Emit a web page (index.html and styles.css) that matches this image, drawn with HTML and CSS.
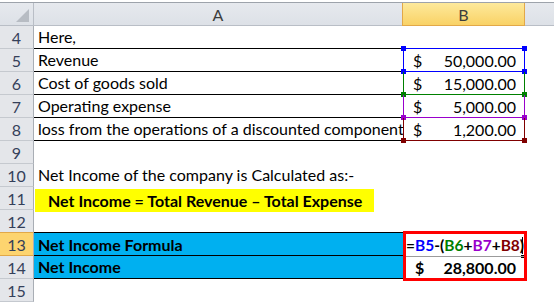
FILE: index.html
```html
<!DOCTYPE html>
<html>
<head>
<meta charset="utf-8">
<link rel="stylesheet" href="styles.css">
</head>
<body>
<div class="sheet">
  <div class="row colhead">
    <div class="corner"><span class="tri"></span></div>
    <div class="ch">A</div>
    <div class="ch ch-sel">B</div>
    <div class="ch ch-rest"></div>
  </div>

  <div class="row">
    <div class="rh">4</div>
    <div class="a bb">Here,</div>
    <div class="b"></div>
    <div></div>
  </div>
  <div class="row">
    <div class="rh">5</div>
    <div class="a bb">Revenue</div>
    <div class="b ref ref-blue"><span class="cur">$</span><span>50,000.00</span>
      <i class="h tl"></i><i class="h tr"></i><i class="h bl"></i><i class="h br"></i></div>
    <div></div>
  </div>
  <div class="row">
    <div class="rh">6</div>
    <div class="a bb">Cost of goods sold</div>
    <div class="b ref ref-green"><span class="cur">$</span><span>15,000.00</span>
      <i class="h bl"></i><i class="h br"></i></div>
    <div></div>
  </div>
  <div class="row">
    <div class="rh">7</div>
    <div class="a bb">Operating expense</div>
    <div class="b ref ref-purple"><span class="cur">$</span><span>5,000.00</span>
      <i class="h bl"></i><i class="h br"></i></div>
    <div></div>
  </div>
  <div class="row">
    <div class="rh">8</div>
    <div class="a bb">loss from the operations of a discounted component</div>
    <div class="b ref ref-red"><span class="cur">$</span><span>1,200.00</span>
      <i class="h bl"></i><i class="h br"></i></div>
    <div></div>
  </div>
  <div class="row">
    <div class="rh">9</div>
    <div class="a"></div>
    <div class="b"></div>
    <div></div>
  </div>
  <div class="row">
    <div class="rh">10</div>
    <div class="a">Net Income of the company is Calculated as:-</div>
    <div class="b"></div>
    <div></div>
  </div>
  <div class="row">
    <div class="rh">11</div>
    <div class="a"><div class="callout">Net Income = Total Revenue – Total Expense</div></div>
    <div class="b"></div>
    <div></div>
  </div>
  <div class="row">
    <div class="rh">12</div>
    <div class="a"></div>
    <div class="b"></div>
    <div></div>
  </div>
  <div class="result">
    <div class="row">
      <div class="rh rh-sel">13</div>
      <div class="a cyan bt bb bold">Net Income Formula</div>
      <div class="b formula bold"><span>=</span><span class="c-blue">B5</span><span>-(</span><span class="c-green">B6</span><span>+</span><span class="c-purple">B7</span><span>+</span><span class="c-red">B8</span><span>)</span><i class="caret"></i><i class="fill"></i></div>
      <div></div>
    </div>
    <div class="row">
      <div class="rh">14</div>
      <div class="a cyan bb bold">Net Income</div>
      <div class="b bold total"><span class="cur">$</span><span>28,800.00</span></div>
      <div></div>
    </div>
    <div class="redbox"></div>
  </div>
  <div class="row">
    <div class="rh">15</div>
    <div class="a"></div>
    <div class="b"></div>
    <div></div>
  </div>
</div>
</body>
</html>
```

FILE: styles.css
```css
html, body {
  margin: 0;
  padding: 0;
  background: #ffffff;
}
.sheet {
  width: 554px;
  height: 302px;
  overflow: hidden;
  font-family: Lato, "Liberation Sans", sans-serif;
  font-size: 16px;
  color: #000;
}
.row {
  display: grid;
  grid-template-columns: 34px 369px 122px 29px;
  height: 23px;
}
.colhead {
  margin-top: 2px;
  height: 24px;
  box-sizing: border-box;
  border-top: 1px solid #9da3ab;
  border-bottom: 1px solid #b9bec6;
  background: linear-gradient(#e6e9ee, #dde1e7);
}
.corner {
  position: relative;
  border-right: 1px solid #b9bec6;
}
.tri {
  position: absolute;
  right: 4px;
  bottom: 3px;
  width: 0;
  height: 0;
  border-left: 13px solid transparent;
  border-bottom: 13px solid #b7bcc3;
}
.ch {
  display: flex;
  align-items: center;
  justify-content: center;
  color: #3d3d3d;
  font-size: 16px;
  border-right: 1px solid #c3c7cd;
  box-sizing: border-box;
}
.ch-sel {
  background: linear-gradient(#fde99b, #f9d266);
  border-left: 1px solid #e2a848;
  border-right: 1px solid #e2a848;
  border-bottom: 1px solid #e2a848;
  margin-left: -1px;
  margin-bottom: -1px;
}
.ch-rest {
  border-right: none;
}
.rh {
  box-sizing: border-box;
  background: #e4e6ea;
  border-right: 1px solid #a9aeb5;
  border-bottom: 1px solid #c5c9cf;
  display: flex;
  align-items: center;
  justify-content: center;
  color: #34405a;
  font-size: 16px;
  padding-top: 1px;
}
.rh-sel {
  background: #fdd46f;
  border-bottom-color: #e2a848;
  border-top: 1px solid #e2a848;
  margin-top: -1px;
  height: 24px;
}
.a, .b {
  box-sizing: border-box;
  position: relative;
  line-height: 22px;
  white-space: nowrap;
}
.a {
  padding-left: 4px;
}
.bb {
  border-bottom: 1px solid #000;
}
.bt {
  border-top: 1px solid #000;
  margin-top: -1px;
  height: 24px;
  line-height: 23px;
}
.bold {
  font-weight: 700;
}
.cyan {
  background: #00b0f0;
}
.callout {
  position: absolute;
  left: 1px;
  top: 2px;
  width: 339px;
  height: 23px;
  background: #ffff00;
  font-weight: 700;
  padding-left: 13px;
  box-sizing: border-box;
  line-height: 23px;
}
.b {
  display: flex;
  justify-content: space-between;
  padding: 0 8px 0 9px;
}
.ref {
  margin-top: -1px;
  height: 24px;
  line-height: 23px;
  border: 1px solid;
}
.ref-blue { border-color: #0000ff; }
.ref-green { border-color: #008000; border-top: none; height: 23px; margin-top: 0; }
.ref-purple { border-color: #9900cc; border-top: none; height: 23px; margin-top: 0; }
.ref-red { border-color: #800000; border-top: none; height: 23px; margin-top: 0; }
.ref-blue .h { background: #0000ff; }
.ref-green .h { background: #008000; }
.ref-purple .h { background: #9900cc; }
.ref-red .h { background: #800000; }
.h {
  position: absolute;
  width: 5px;
  height: 5px;
}
.tl { left: -3px; top: -3px; }
.tr { right: -3px; top: -3px; }
.bl { left: -3px; bottom: -3px; }
.br { right: -3px; bottom: -3px; }
.result {
  position: relative;
}
.formula {
  justify-content: flex-start;
  padding-left: 3px;
  padding-top: 1px;
  font-size: 15.5px;
}
.c-blue { color: #0000ff; }
.c-green { color: #008000; }
.c-purple { color: #9900cc; }
.c-red { color: #800000; }
.caret {
  position: absolute;
  right: 2px;
  top: 4px;
  width: 1px;
  height: 17px;
  background: #000;
}
.fill {
  position: absolute;
  right: 1px;
  bottom: -2px;
  width: 3px;
  height: 3px;
  background: #000;
}
.total {
  border-top: 1px solid #9b9b9b;
  line-height: 21px;
  padding: 0 9px 0 12px;
}
.redbox {
  position: absolute;
  left: 403px;
  top: -2px;
  width: 124px;
  height: 50px;
  box-sizing: border-box;
  border: 3px solid #ff0000;
  pointer-events: none;
}
```
